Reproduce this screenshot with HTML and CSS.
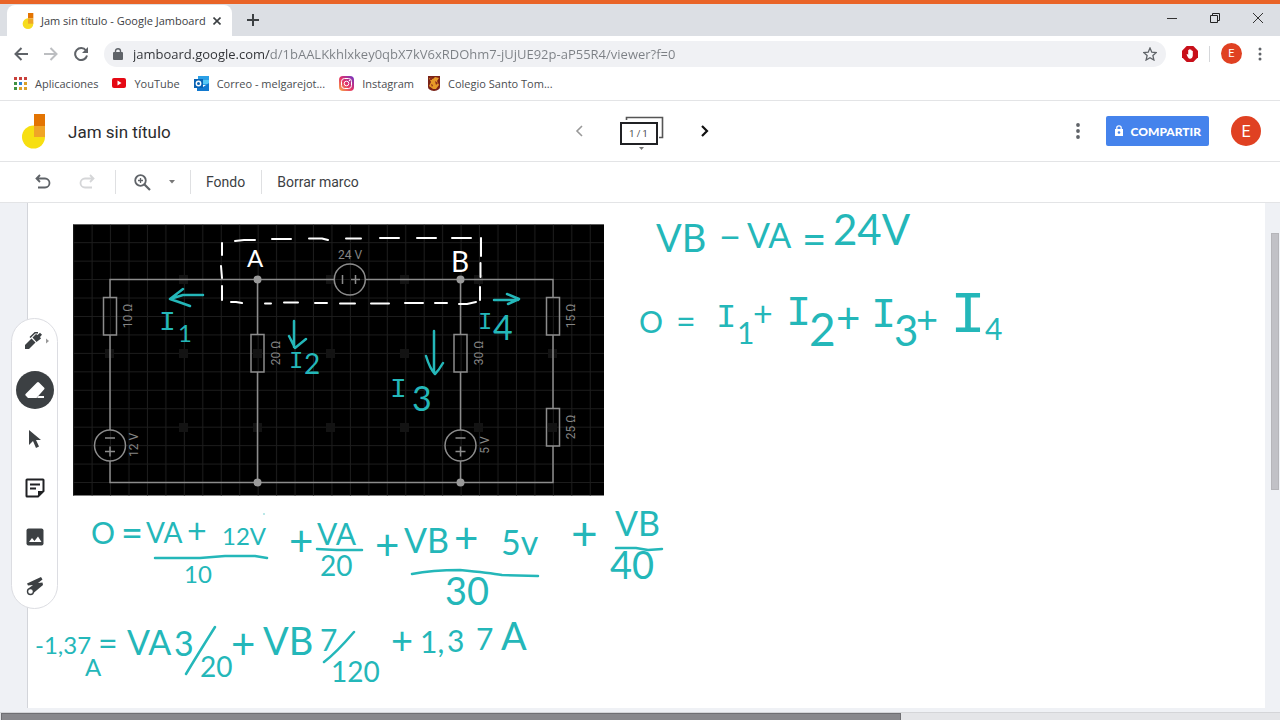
FILE: index.html
```html
<!DOCTYPE html>
<html lang="es">
<head>
    <meta charset="UTF-8">
    <meta name="viewport" content="width=device-width, initial-scale=1.0">
    <title>Jam sin título - Google Jamboard</title>
    <link rel="stylesheet" href="styles.css">
</head>
<body>

<div class="tab-strip">
    <div class="tab">
        <svg width="14" height="16" viewBox="0 0 24 36"><circle cx="12" cy="24" r="12" fill="#f6dc1e"/><path d="M12 0h12v12H12z" fill="#e37402"/><path d="M12 12h12v12H12z" fill="#f0a526"/></svg>
        <span class="tab-title">Jam sin título - Google Jamboard</span>
        <button class="plain" aria-label="Cerrar pestaña">
            <svg width="8" height="8" viewBox="0 0 8 8"><path d="M.5.5l7 7M7.500.5l-7 7" stroke="#3c4043" stroke-width="1.600"/></svg>
        </button>
    </div>
    <button class="plain new-tab" aria-label="Nueva pestaña">
        <svg width="12" height="12" viewBox="0 0 12 12"><path d="M6 0v12M0 6h12" stroke="#3c4043" stroke-width="2"/></svg>
    </button>
    <div class="window-buttons">
        <button class="plain" aria-label="Minimizar"><svg width="10" height="10" viewBox="0 0 10 10"><path d="M0 5.500h10" stroke="#333"/></svg></button>
        <button class="plain" aria-label="Restaurar"><svg width="10" height="10" viewBox="0 0 10 10" fill="none" stroke="#222"><path d="M.5 2.500h7v7h-7zM2.500 2.500v-2h7v7h-2"/></svg></button>
        <button class="plain" aria-label="Cerrar"><svg width="10" height="10" viewBox="0 0 10 10"><path d="M0 0l10 10M10 0L0 10" stroke="#333"/></svg></button>
    </div>
</div>

<div class="nav-bar">
    <button class="plain" aria-label="Atrás"><svg width="14" height="14" viewBox="0 0 14 14" fill="none" stroke="#5f6368" stroke-width="2"><path d="M14 7H2M7.500 1L1.500 7l6 6"/></svg></button>
    <button class="plain" aria-label="Adelante"><svg width="14" height="14" viewBox="0 0 14 14" fill="none" stroke="#bcbec1" stroke-width="2"><path d="M0 7h12M6.500 1l6 6-6 6"/></svg></button>
    <button class="plain" aria-label="Recargar"><svg width="14" height="14" viewBox="0 0 14 14"><path d="M12 3.500A6 6 0 1 0 13 8.500" fill="none" stroke="#5f6368" stroke-width="2"/><path d="M14 0v6H8z" fill="#5f6368"/></svg></button>
    <div class="omnibox">
        <svg width="10" height="12" viewBox="0 0 10 12"><path d="M1 4h8q1 0 1 1v6q0 1-1 1H1q-1 0-1-1V5q0-1 1-1z" fill="#5f6368"/><path d="M2.500 5V3a2.500 2.300 0 0 1 5 0v2" fill="none" stroke="#5f6368" stroke-width="1.400"/></svg>
        <input class="url" type="text" aria-label="Dirección" value="jamboard.google.com/d/1bAALKkhlxkey0qbX7kV6xRDOhm7-jUjUE92p-aP55R4/viewer?f=0">
        <button class="plain" aria-label="Marcador"><svg width="14" height="14" viewBox="0 0 14 14"><path d="M7 1l1.800 4.200 4.500.4-3.400 3 1 4.400L7 10.700 3.100 13l1-4.400-3.400-3 4.500-.4z" fill="none" stroke="#5f6368" stroke-width="1.300"/></svg></button>
    </div>
    <button class="plain" aria-label="AdBlock"><svg width="16" height="16" viewBox="0 0 16 16"><path d="M4.700 0h6.600L16 4.700v6.600L11.300 16H4.700L0 11.300V4.700z" fill="#c8101a"/><path d="M4.500 8.500l1-.6.7 1V4.200q.6-.8 1.100 0V3.300q.6-.8 1.200 0v.8q.6-.7 1.200 0v1q.6-.7 1.100 0V10q-.4 2.800-2.600 2.800-1.500 0-2.300-1.500z" fill="#fff"/></svg></button>
    <span class="nav-divider"></span>
    <button class="plain avatar avatar-small">E</button>
    <button class="plain" aria-label="Menú"><svg width="4" height="14" viewBox="0 0 4 14" fill="#5f6368"><circle cx="2" cy="2" r="1.500"/><circle cx="2" cy="7" r="1.500"/><circle cx="2" cy="12" r="1.500"/></svg></button>
</div>

<nav class="bookmarks">
    <a href="#"><svg width="13" height="13" viewBox="0 0 13 13"><path d="M0 0h3v3H0zM5 0h3v3H5zM10 0h3v3h-3z" fill="#c9403b"/><path d="M0 5h3v3H0z" fill="#3f9142"/><path d="M5 5h3v3H5z" fill="#2b83d6"/><path d="M10 5h3v3h-3z" fill="#dba128"/><path d="M0 10h3v3H0z" fill="#3f9142"/><path d="M5 10h3v3H5zM10 10h3v3h-3z" fill="#dba128"/></svg>Aplicaciones</a>
    <a href="#"><svg width="14" height="12" viewBox="0 0 14 12"><rect y="1" width="14" height="10" rx="2" fill="#e50914"/><path d="M5.500 3.500v5L9.500 6z" fill="#fff"/></svg>YouTube</a>
    <a href="#"><svg width="15" height="15" viewBox="0 0 15 15"><path d="M4 0h11v9H4z" fill="#2a9fe6"/><path d="M9 4h6v4H9z" fill="#56c8f5"/><path d="M3 7l6 4 6-4v8H3z" fill="#1279cf"/><path d="M0 3h9v9H0z" fill="#0a64b5"/><circle cx="4.500" cy="7.500" r="2.200" fill="none" stroke="#fff" stroke-width="1.400"/></svg>Correo - melgarejot...</a>
    <a href="#"><svg width="15" height="15" viewBox="0 0 15 15"><defs><linearGradient id="insta" x1="0" y1="1" x2="1" y2="0"><stop offset="0" stop-color="#fcb045"/><stop offset=".5" stop-color="#e1306c"/><stop offset="1" stop-color="#6a35c8"/></linearGradient></defs><rect width="15" height="15" rx="4" fill="url(#insta)"/><g fill="none" stroke="#fff"><rect x="2.500" y="2.500" width="10" height="10" rx="3"/><circle cx="7.500" cy="7.500" r="2.300"/></g><circle cx="10.500" cy="4.500" r=".7" fill="#fff"/></svg>Instagram</a>
    <a href="#"><svg width="12" height="15" viewBox="0 0 12 15"><path d="M0 0h12v11q0 3-6 4-6-1-6-4z" fill="#7a2318"/><path d="M1 2l4 1 2-2 4 1-2 3 2 4-3 4H5L1 10l2-4z" fill="#e79a28"/><path d="M2 1h2v3H2zM7 5l3 2-2 2zM3 8l2 1-1 2z" fill="#8d2c1a"/></svg>Colegio Santo Tom...</a>
</nav>

<header class="app-header">
    <div class="brand">
        <svg width="23" height="35" viewBox="0 0 23 35"><circle cx="11.500" cy="23" r="11.500" fill="#f7df11"/><path d="M12 0h11v12H12z" fill="#e37402"/><path d="M12 12h11v11H12z" fill="#f0a526"/></svg>
        <h1>Jam sin título</h1>
    </div>
    <div class="frame-nav">
        <button class="plain" aria-label="Marco anterior"><svg width="8" height="12" viewBox="0 0 8 12"><path d="M7 1L2 6l5 5" fill="none" stroke="#999" stroke-width="1.600"/></svg></button>
        <button class="plain frames">
            <svg width="44" height="36" viewBox="0 0 44 36" fill="none"><path d="M6.500 4V1.500h36v20H39" stroke="#555" stroke-width="1.600"/><rect x="1" y="7" width="36" height="21" stroke="#202124" stroke-width="2"/><path d="M19 31h5l-2.500 3z" fill="#777"/></svg>
            <span>1 / 1</span>
        </button>
        <button class="plain" aria-label="Marco siguiente"><svg width="8" height="12" viewBox="0 0 8 12"><path d="M1 1l5 5-5 5" fill="none" stroke="#111" stroke-width="2.200"/></svg></button>
    </div>
    <div class="header-actions">
        <button class="plain" aria-label="Más acciones"><svg width="4" height="16" viewBox="0 0 4 16" fill="#5f6368"><circle cx="2" cy="2" r="1.900"/><circle cx="2" cy="8" r="1.900"/><circle cx="2" cy="14" r="1.900"/></svg></button>
        <div class="account">
            <button class="share"><svg width="10" height="12" viewBox="0 0 10 12"><path d="M1 4h8v7H1z" fill="#fff"/><path d="M2.800 4V2.800a2.200 2 0 0 1 4.400 0V4" fill="none" stroke="#fff" stroke-width="1.300"/><circle cx="5" cy="7.500" r="1.300" fill="#4583ec"/></svg>COMPARTIR</button>
            <button class="plain avatar">E</button>
        </div>
    </div>
</header>

<div class="edit-bar">
    <button class="plain undo" aria-label="Deshacer"><svg width="16" height="16" viewBox="0 0 16 16" fill="none" stroke="#5f6368" stroke-width="1.800"><path d="M5 1L1.500 4.500 5 8M1.500 4.500H10a4.500 4.500 0 0 1 0 9H3"/></svg></button>
    <button class="plain redo" aria-label="Rehacer"><svg width="16" height="16" viewBox="0 0 16 16" fill="none" stroke="#d5d6d8" stroke-width="1.800"><path d="M11 1l3.500 3.500L11 8M14.500 4.500H6a4.500 4.500 0 0 0 0 9h7"/></svg></button>
    <button class="plain zoom" aria-label="Zoom">
        <svg width="17" height="17" viewBox="0 0 17 17" fill="none" stroke="#5f6368"><circle cx="6.500" cy="6.500" r="5.300" stroke-width="1.800"/><path d="M10.500 10.500l5.500 5.500" stroke-width="2.200"/><path d="M6.500 4v5M4 6.500h5" stroke-width="1.300"/></svg>
        <svg width="6" height="4" viewBox="0 0 6 4"><path d="M0 0h6L3 3.500z" fill="#777"/></svg>
    </button>
    <button class="plain labelled">Fondo</button>
    <button class="plain labelled">Borrar marco</button>
</div>

<main class="workspace">
    <div class="board">
        <svg class="canvas" width="100%" height="100%">
            <defs>
                <pattern id="grid" x="18" y="12" width="18.450" height="18.450" patternUnits="userSpaceOnUse">
                    <path d="M9.200 0v18.450M0 9.200h18.450" stroke="#1d1d1d" fill="none"/>
                </pattern>
            </defs>
            <g transform="translate(-28 -203)">
                <!-- circuit picture -->
                <rect x="73" y="224.500" width="531" height="271" fill="#000"/>
                <rect x="45" y="21.500" width="531" height="271" transform="translate(28 203)" fill="url(#grid)"/>
                <g fill="#131313">
                    <path d="M179 275h9v9h-9zM326 275h9v9h-9zM400 275h9v9h-9zM474 275h9v9h-9z"/>
                    <path d="M105 349h9v9h-9zM179 349h9v9h-9zM253 349h9v9h-9zM326 349h9v9h-9zM400 349h9v9h-9zM548 349h9v9h-9z"/>
                    <path d="M179 423h9v9h-9zM253 423h9v9h-9zM326 423h9v9h-9zM400 423h9v9h-9zM474 423h9v9h-9zM548 423h9v9h-9z"/>
                </g>
                <g class="wire">
                    <path d="M334 279.500H110v18M110 335v95M110 461v21.500h443V446M365.500 279.500H553v18M553 335v74M257.500 279.500V334M257.500 372v110M460.500 279.500V334M460.500 372v58M460.500 461v21"/>
                    <path d="M103.500 297.500h13V335h-13zM251 334.500h13V372h-13zM454 334.500h13V372h-13zM546.500 297.500h13V335h-13zM546.500 408.500h13V446h-13z"/>
                    <circle cx="110" cy="445.500" r="15.500"/>
                    <circle cx="460.500" cy="445.500" r="15.500"/>
                    <circle cx="349.800" cy="279.500" r="15.500"/>
                    <path d="M105 438h10M105 451.500h10M110 446.500v10M455.500 438h10M455.500 451.500h10M460.500 446.500v10M342.500 275v9M351 279.500h9M355.500 275v9"/>
                </g>
                <g fill="#999">
                    <circle cx="257.500" cy="279.500" r="4"/><circle cx="460.500" cy="279.500" r="4"/>
                    <circle cx="257.500" cy="482.500" r="4"/><circle cx="460.500" cy="482.500" r="4"/>
                </g>
                <g class="part">
                    <text x="350" y="259">24 V</text>
                    <text transform="translate(132 316) rotate(-90)">10 Ω</text>
                    <text transform="translate(280 353) rotate(-90)">20 Ω</text>
                    <text transform="translate(483 353) rotate(-90)">30 Ω</text>
                    <text transform="translate(575 316) rotate(-90)">15 Ω</text>
                    <text transform="translate(575 427) rotate(-90)">25 Ω</text>
                    <text transform="translate(138 445) rotate(-90)">12 V</text>
                    <text transform="translate(489 445) rotate(-90)">5 V</text>
                </g>

                <!-- supernode outline -->
                <path class="stroke white" d="M235 241l9-1h11M272 239h19M309 238.500h13l6 1.500M346 238.500h15M380 238h19M417 238h19M452 238h19M481 238v18M480.500 263v14M480 287v13M476 302l-9 2h-8M447 303h-12M423 303h-18M389 303.500h-18M355 303.500h-15M327 303h-12M298 302.500h-14M271 303.500h-6M242 303l-6-1h-5M222 300v-14M222 278l-1-12M222 255v-12"/>
                <g class="ink white">
                    <text class="s24" x="247" y="267">A</text>
                    <text class="s28" x="451" y="272">B</text>
                </g>

                <!-- currents -->
                <path class="stroke" d="M203 295h-20l-13 4M183 289l-13 10q9 3 20 7M294 321v26M289 336l6 12 11-9M434 331v41M426 356q4 13 9 18 4-4 8-11M494 300h24M507 294l12 5-11 5"/>
                <g class="ink">
                    <text class="s28 serif-i" x="159" y="330">I</text><text class="s24" x="178" y="342">1</text>
                    <text class="s24 serif-i" x="289" y="368">I</text><text class="s28" x="304" y="374">2</text>
                    <text class="s28 serif-i" x="390" y="397">I</text><text class="s34" x="412" y="411">3</text>
                    <text class="s24 serif-i" x="478" y="329">I</text><text class="s34" x="493" y="340">4</text>
                </g>

                <!-- equations on the right -->
                <g class="ink">
                    <text class="s38" x="656" y="252">VB</text>
                    <text class="s38" x="719" y="251">−</text>
                    <text class="s34" x="747" y="248">VA</text>
                    <text class="s42" x="802" y="254">=</text>
                    <text class="s42" x="833" y="245">24V</text>

                    <text class="s30" x="639" y="333">O</text>
                    <text class="s34" x="676" y="334">=</text>
                    <text class="s34 serif-i" x="716" y="327">I</text><text class="s30" x="737" y="344">1</text>
                    <text class="s34" x="753" y="326">+</text>
                    <text class="s42 serif-i" x="786" y="325">I</text><text class="s46" x="809" y="346">2</text>
                    <text class="s42" x="836" y="333">+</text>
                    <text class="s42 serif-i" x="871" y="327">I</text><text class="s42" x="894" y="346">3</text>
                    <text class="s38" x="916" y="333">+</text>
                    <text class="s60 serif-i" x="950" y="332">I</text><text class="s30" x="985" y="340">4</text>
                </g>

                <!-- node equation -->
                <path class="stroke" d="M155 558h45l25-2h30l12 2M317 549l20 1h25M412 574q20-4 48-4 30 3 42 5l36 1M616 548h20l12 2 14-1"/>
                <circle cx="264" cy="514" r="1" fill="#a5e0e0"/>
                <g class="ink">
                    <text class="s30" x="91" y="544">O</text>
                    <text class="s38" x="121" y="547">=</text>
                    <text class="s28" x="146" y="543">VA</text>
                    <text class="s34" x="187" y="543">+</text>
                    <text class="s24" x="222" y="545">12V</text>
                    <text class="s24" x="184" y="583">10</text>
                    <text class="s42" x="289" y="556">+</text>
                    <text class="s30" x="317" y="545">VA</text>
                    <text class="s28" x="320" y="576">20</text>
                    <text class="s42" x="375" y="560">+</text>
                    <text class="s34" x="404" y="553">VB</text>
                    <text class="s42" x="454" y="553">+</text>
                    <text class="s34" x="501" y="555">5v</text>
                    <text class="s38" x="445" y="605">30</text>
                    <text class="s46" x="571" y="550">+</text>
                    <text class="s34" x="615" y="536">VB</text>
                    <text class="s38" x="610" y="579">40</text>
                </g>

                <!-- simplified equation -->
                <path class="stroke" d="M186 674q12-20 29-47M324 662q12-9 30-30"/>
                <g class="ink">
                    <text class="s24" x="35" y="654">-1,37</text>
                    <text class="s24" x="85" y="676">A</text>
                    <text class="s34" x="98" y="656">=</text>
                    <text class="s34" x="127" y="655">VA</text>
                    <text class="s34" x="174" y="656">3</text>
                    <text class="s28" x="200" y="677">20</text>
                    <text class="s42" x="231" y="659">+</text>
                    <text class="s38" x="263" y="655">VB</text>
                    <text class="s30" x="320" y="651">7</text>
                    <text class="s28" x="331" y="682">120</text>
                    <text class="s38" x="391" y="654">+</text>
                    <text class="s30" x="420" y="653">1,</text>
                    <text class="s30" x="447" y="652">3</text>
                    <text class="s30" x="476" y="650">7</text>
                    <text class="s38" x="501" y="650">A</text>
                </g>
            </g>
        </svg>
    </div>
    <div class="v-track"><div class="v-thumb"></div></div>

    <div class="tools">
        <button class="plain" aria-label="Lápiz"><svg width="26" height="18" viewBox="0 0 26 18"><path d="M1 17v-4l6.500-6.500 4 4L5 17z" fill="#3c4043"/><path d="M8.500 5.500L12 2l1.500 1L16 .800l2 2L16 5l1 1.500-4.500 3.500z" fill="#3c4043"/><path d="M6 5.500L11 .8h3" stroke="#3c4043" stroke-width="1.500" fill="none"/><path d="M22 6.500L25 9l-3 2.500z" fill="#999"/></svg></button>
        <button class="plain selected" aria-label="Borrar"><svg width="20" height="18" viewBox="0 0 20 18" fill="#fff"><path d="M12 1.500q1-1 2 0l5 5q1 1 0 2L11.500 17H3L.8 14.800q-1-1 0-2z"/><path d="M13.500 15H19v2h-7z"/></svg></button>
        <button class="plain" aria-label="Seleccionar"><svg width="14" height="20" viewBox="0 0 14 20"><path d="M1 1v15l4-4 3 7 3-1.500-3-6.500h5z" fill="#3c4043"/></svg></button>
        <button class="plain" aria-label="Nota"><svg width="20" height="20" viewBox="0 0 20 20"><path d="M2 1.500h16q.5 0 .5.500v11L13 18.500H2q-.5 0-.5-.5V2q0-.5.500-.5z" fill="none" stroke="#202124" stroke-width="2"/><path d="M5 6.500h10M5 10.500h6" stroke="#202124" stroke-width="1.800"/><path d="M13 18.500V13h5.500z" fill="#202124"/></svg></button>
        <button class="plain" aria-label="Imagen"><svg width="18" height="18" viewBox="0 0 18 18"><rect x=".5" y=".5" width="17" height="17" rx="2" fill="#3c4043"/><path d="M3 14l3-4 2.500 3L12 8.500l3.500 5.500z" fill="#fff"/></svg></button>
        <button class="plain" aria-label="Láser"><svg width="18" height="20" viewBox="0 0 18 20"><path d="M1 7.500L15 1l1.500 2.500L12 7l4.500-.5L17 9 7.500 17 3 12l4-3-5 .5z" fill="#3c4043"/><circle cx="4.500" cy="15.500" r="3" fill="#fff" stroke="#3c4043" stroke-width="1.400"/></svg></button>
    </div>
</main>

<div class="h-track"><div class="h-thumb"></div></div>

</body>
</html>
```

FILE: styles.css
```css
* {
    margin: 0;
    padding: 0;
    box-sizing: border-box;
}
body {
    display: flex;
    flex-direction: column;
    height: 100vh;
    overflow: hidden;
    border-top: 4px solid #e96427;
    background-color: #fff;
    font-family: Roboto, sans-serif;
    color: #3c4043;
}
svg {
    display: block;
    flex: none;
}
.plain {
    display: flex;
    align-items: center;
    justify-content: center;
    background: none;
    border: none;
    font: inherit;
    color: inherit;
    cursor: pointer;
}

/* browser window */
.tab-strip {
    display: flex;
    align-items: center;
    height: 32px;
    background-color: #dcdfe4;
    font-family: "Open Sans", sans-serif;
}
.tab {
    display: flex;
    align-items: center;
    align-self: flex-end;
    width: 225px;
    height: 31px;
    margin-left: 7px;
    padding: 0 11px 0 14px;
    border-radius: 8px 8px 0 0;
    background-color: #fff;
}
.tab-title {
    flex: 1;
    margin-left: 6px;
    font-size: 11px;
    white-space: nowrap;
}
.new-tab {
    margin-left: 15px;
}
.window-buttons {
    display: flex;
    gap: 33px;
    margin-left: auto;
    padding: 0 17px 4px 0;
}
.nav-bar {
    display: flex;
    align-items: center;
    height: 35px;
    padding: 0 18px 0 14px;
    gap: 16px;
}
.omnibox {
    display: flex;
    align-items: center;
    flex: 1;
    height: 26px;
    padding: 0 9px;
    border-radius: 13px;
    background-color: #f0f1f4;
}
.url {
    flex: 1;
    min-width: 0;
    margin-left: 10px;
    border: none;
    outline: none;
    background: linear-gradient(to right, #303236 137px, #7b7f84 137px);
    -webkit-background-clip: text;
    background-clip: text;
    color: transparent;
    font-family: "Open Sans", sans-serif;
    font-size: 13px;
    line-height: 18px;
}
.nav-divider {
    width: 1px;
    height: 16px;
    margin: 0 -5px;
    background-color: #d5d7da;
}
.avatar {
    width: 30px;
    height: 30px;
    border-radius: 50%;
    background-color: #e04122;
    color: #fff;
    font-size: 16px;
}
.avatar-small {
    width: 21px;
    height: 21px;
    font-size: 11px;
}
.bookmarks {
    display: flex;
    align-items: center;
    gap: 14px;
    height: 30px;
    padding: 0 14px 5px;
    border-bottom: 1px solid #e3e4e6;
    font-family: "Open Sans", sans-serif;
    font-size: 11px;
}
.bookmarks a {
    display: flex;
    align-items: center;
    gap: 8px;
    color: #4a4d51;
    text-decoration: none;
}

/* jamboard header */
.app-header {
    display: grid;
    grid-template-columns: 1fr auto 1fr;
    align-items: center;
    height: 61px;
    padding: 0 19px 0 22px;
    border-bottom: 1px solid #e3e4e6;
}
.brand {
    display: flex;
    align-items: center;
    gap: 23px;
}
h1 {
    padding-top: 2px;
    font-size: 17px;
    font-weight: 400;
    color: #2b2c2e;
}
.frame-nav {
    display: flex;
    align-items: center;
    gap: 37px;
}
.frames {
    position: relative;
    padding-top: 5px;
}
.frames span {
    position: absolute;
    top: 18px;
    left: 0;
    width: 38px;
    font-size: 9px;
    text-align: center;
}
.header-actions {
    display: flex;
    align-items: center;
    justify-content: flex-end;
    gap: 26px;
}
.account {
    display: flex;
    align-items: center;
    gap: 22px;
}
.share {
    display: flex;
    align-items: center;
    gap: 7px;
    height: 30px;
    padding: 0 8px;
    border: none;
    border-radius: 2px;
    background-color: #4583ec;
    color: #fff;
    font-family: Lato, sans-serif;
    font-size: 12px;
    font-weight: 900;
    cursor: pointer;
}
.edit-bar {
    display: flex;
    align-items: center;
    height: 41px;
    padding-left: 35px;
    border-bottom: 1px solid #e3e4e6;
    font-size: 14px;
}
.redo {
    margin: 0 20px 0 28px;
}
.zoom {
    gap: 18px;
    height: 24px;
    padding: 0 15px 0 18px;
    border-left: 1px solid #dfe0e2;
}
.labelled {
    height: 24px;
    padding: 0 16px 0 15px;
    border-left: 1px solid #dfe0e2;
}

/* board */
.workspace {
    position: relative;
    flex: 1;
    display: flex;
    min-height: 0;
    padding: 0 0 4px 27px;
    background-color: #eff1f5;
}
.board {
    flex: 1;
    min-width: 0;
    overflow: hidden;
    border-left: 1px solid #d3d5da;
    background-color: #fff;
}
.wire {
    fill: none;
    stroke: #8c8c8c;
    stroke-width: 1.5;
}
.part {
    fill: #858585;
    font-size: 12px;
    text-anchor: middle;
}
.stroke {
    fill: none;
    stroke: #24b7b9;
    stroke-width: 2.5;
    stroke-linecap: round;
    stroke-linejoin: round;
}
.stroke.white {
    stroke: #fff;
    stroke-width: 2;
}
.ink {
    fill: #24b7b9;
    font-family: Lato, sans-serif;
}
.ink.white {
    fill: #fff;
}
.serif-i {
    font-family: "Liberation Mono", monospace;
}
.s24 { font-size: 24px; }
.s28 { font-size: 28px; }
.s30 { font-size: 30px; }
.s34 { font-size: 34px; }
.s38 { font-size: 38px; }
.s42 { font-size: 42px; }
.s46 { font-size: 46px; }
.s60 { font-size: 60px; }

.v-track {
    width: 15px;
    padding: 30px 1px 0 6px;
}
.v-thumb {
    height: 54%;
    background-color: #c1c1c6;
    border: 1px solid #b5b5b9;
}
.h-track {
    height: 8px;
    padding-left: 1px;
    border-top: 1px solid #d4d5d8;
    background-color: #e4e5e8;
}
.h-thumb {
    width: 70.4%;
    height: 8px;
    border: 1px solid #6f6f73;
    background-color: #88888c;
}

/* floating tool palette */
.tools {
    position: absolute;
    top: 115px;
    left: 11px;
    display: flex;
    flex-direction: column;
    align-items: center;
    gap: 11px;
    width: 47px;
    padding: 3px 0;
    border: 1px solid #dcdde2;
    border-radius: 24px;
    background-color: #fff;
}
.tools .plain {
    width: 38px;
    height: 38px;
    border-radius: 50%;
}
.tools .plain:first-child {
    padding-left: 5px;
}
.tools .selected {
    background-color: #3c4043;
}
```
